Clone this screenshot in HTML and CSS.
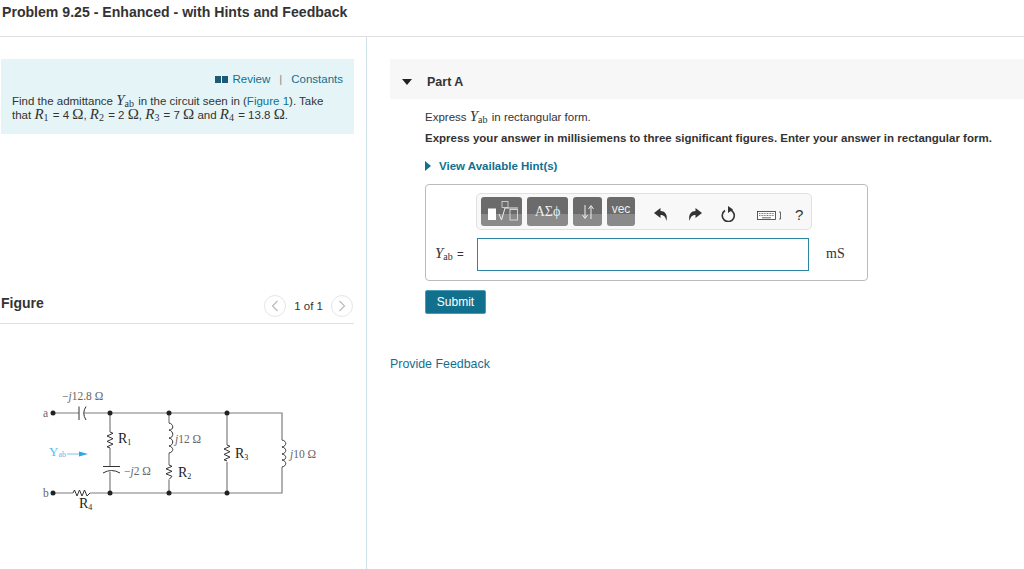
FILE: index.html
```html
<!DOCTYPE html>
<html lang="en">
<head>
    <meta charset="UTF-8">
    <title>Problem 9.25 - Enhanced - with Hints and Feedback</title>
    <link rel="stylesheet" href="styles.css">
</head>
<body>

<header class="top-bar">
    <h1>Problem 9.25 - Enhanced - with Hints and Feedback</h1>
</header>

<div class="columns">
    <section class="left">
        <div class="intro">
            <div class="intro-links">
                <svg class="book" width="13" height="7" viewBox="0 0 13 7"><rect width="6" height="7" fill="#1c5a78"/><rect x="7" width="6" height="7" fill="#1c5a78"/></svg>
                <a>Review</a><span class="sep">|</span><a>Constants</a>
            </div>
            <p>Find the admittance <i class="m">Y<sub>ab</sub></i> in the circuit seen in (<a>Figure 1</a>). Take<br>that <i class="m">R<sub>1</sub></i> = 4 <span class="m">Ω</span>, <i class="m">R<sub>2</sub></i> = 2 <span class="m">Ω</span>, <i class="m">R<sub>3</sub></i> = 7 <span class="m">Ω</span> and <i class="m">R<sub>4</sub></i> = 13.8 <span class="m">Ω</span>.</p>
        </div>

        <div class="figure-head">
            <h2>Figure</h2>
            <div class="pager">
                <span class="round"><svg width="8" height="12" viewBox="0 0 8 12"><path d="M6.5 1L1.5 6l5 5" fill="none" stroke="#bbb" stroke-width="1.2"/></svg></span>
                <span class="pager-text">1 of 1</span>
                <span class="round"><svg width="8" height="12" viewBox="0 0 8 12"><path d="M1.5 1l5 5-5 5" fill="none" stroke="#bbb" stroke-width="1.2"/></svg></span>
            </div>
        </div>

        <svg class="circuit" width="300" height="140" viewBox="0 0 300 140">
            <g fill="none" stroke="#7d7d7d" stroke-width="1.2">
                <path d="M23 33H49M54 33H252V60M252 87V113H60M43 113H23"/>
                <path d="M80 33V52M80 68V86M80 92V113"/>
                <path d="M139 33V43M139 73V85M139 100V113"/>
                <path d="M197 33V65M197 82V113"/>
            </g>
            <g fill="none" stroke="#333" stroke-width="1">
                <path d="M49 26.5V40M56 26.5Q51.5 33 56 40"/>
                <path d="M73 86.500H90M73 93Q81.500 88 90 93"/>
                <path d="M80 52l3 1.300-6 2.700 6 2.700-6 2.700 6 2.700-6 2.700 3 1.100"/>
                <path d="M139 85l3 1.300-6 2.500 6 2.500-6 2.500 6 2.500-3 3.200"/>
                <path d="M197 65l3 1.300-6 2.700 6 2.700-6 2.700 6 2.700-6 2.700 3 1.100"/>
                <path d="M43 113l1.500-3 2.500 6 2.500-6 2.500 6 2.500-6 2.500 6 3-3"/>
                <path d="M139 43c5 1 5 7 0 7c5 1 5 8 0 8c5 1 5 7 0 8c5 1 5 6 0 7"/>
                <path d="M252 60c5 1 5 6 0 7c5 1 5 6 0 7c5 1 5 6 0 6c5 1 5 6 0 7"/>
            </g>
            <g fill="#222">
                <circle cx="23" cy="33" r="2.500"/><circle cx="23" cy="113" r="2.500"/>
                <circle cx="80" cy="33" r="2.500"/><circle cx="139" cy="33" r="2.500"/><circle cx="197" cy="33" r="2.500"/>
                <circle cx="80" cy="113" r="2.500"/><circle cx="139" cy="113" r="2.500"/><circle cx="197" cy="113" r="2.500"/>
            </g>
            <g class="c-label">
                <text x="13" y="37">a</text>
                <text x="13" y="117">b</text>
                <text x="32" y="20">−<tspan font-style="italic">j</tspan>12.8 Ω</text>
                <text x="145" y="63"><tspan font-style="italic">j</tspan>12 Ω</text>
                <text x="260" y="78"><tspan font-style="italic">j</tspan>10 Ω</text>
                <text x="94" y="95">−<tspan font-style="italic">j</tspan>2 Ω</text>
            </g>
            <g class="c-res">
                <text x="88" y="63">R<tspan class="c-sub" dy="2">1</tspan></text>
                <text x="148" y="97">R<tspan class="c-sub" dy="2">2</tspan></text>
                <text x="205" y="78">R<tspan class="c-sub" dy="2">3</tspan></text>
                <text x="49" y="128">R<tspan class="c-sub" dy="2">4</tspan></text>
            </g>
            <text class="c-yab" x="19" y="76">Y<tspan font-size="8" dy="1">ab</tspan></text>
            <path d="M37 74H50" stroke="#4fb8e8" stroke-width="0.8"/>
            <path d="M49 71.500l9 2.500-9 2.500z" fill="#2fa8e0"/>
        </svg>
    </section>

    <section class="right">
        <div class="part-bar">
            <svg width="10" height="6" viewBox="0 0 10 6"><path d="M0 0h10L5 6z" fill="#222"/></svg>
            <h3>Part A</h3>
        </div>

        <div class="part-body">
            <p class="prompt">Express <i class="m">Y<sub>ab</sub></i> in rectangular form.</p>
            <p class="instruct">Express your answer in millisiemens to three significant figures. Enter your answer in rectangular form.</p>
            <p class="hint"><svg width="6" height="10" viewBox="0 0 6 10"><path d="M0 0l6 5-6 5z" fill="#12708f"/></svg>View Available Hint(s)</p>

            <div class="answer">
                <div class="toolbar">
                    <span class="tool">
                        <svg width="35" height="24" viewBox="0 0 35 24">
                            <rect x="4" y="8.500" width="8" height="11.500" fill="#fff"/>
                            <path d="M15 14l2.500 6 3.500-12H34" fill="none" stroke="#eee" stroke-width="1"/>
                            <rect x="26" y="9.500" width="7.500" height="10.500" fill="none" stroke="#ddd" stroke-width="0.9"/>
                            <rect x="18" y="1.500" width="6" height="6" fill="none" stroke="#ddd" stroke-width="0.8"/>
                        </svg>
                    </span>
                    <span class="tool">ΑΣϕ</span>
                    <span class="tool tool-arrows">
                        <svg width="14" height="16" viewBox="0 0 14 16"><path d="M4 1v13M1.500 11L4 14.500 6.500 11M10 15V2M7.500 5L10 1.500 12.500 5" fill="none" stroke="#eee" stroke-width="1"/></svg>
                    </span>
                    <span class="tool tool-vec">vec</span>
                    <svg class="act act-undo" width="14" height="13" viewBox="0 0 14 13"><path d="M6.500 0L0 5l6.500 5V7c3 0 5 1.500 6 6 1.500-7-2-10-6-10z" fill="#333"/></svg>
                    <svg class="act act-redo" width="14" height="13" viewBox="0 0 14 13"><path d="M7.500 0L14 5l-6.500 5V7c-3 0-5 1.500-6 6-1.500-7 2-10 6-10z" fill="#333"/></svg>
                    <svg class="act act-reset" width="15" height="16" viewBox="0 0 15 16"><path d="M9 3.800a6 6 0 1 1-5 .7" fill="none" stroke="#333" stroke-width="1.600"/><path d="M7 0l5 3.500L7 7z" fill="#333"/></svg>
                    <svg class="act act-keys" width="24" height="9" viewBox="0 0 24 9"><rect x="0.500" y="0.500" width="18" height="8" fill="#fff" stroke="#333" stroke-width="0.8"/><path d="M2 2.500h15M2 4.500h15" stroke="#777" stroke-width="1" stroke-dasharray="1 .6"/><path d="M5 6.800h9" stroke="#666"/><path d="M22 1h1.500v7H22" fill="none" stroke="#444" stroke-width="0.8"/></svg>
                    <span class="help">?</span>
                </div>
                <div class="entry">
                    <span class="entry-label"><i class="m">Y<sub>ab</sub></i> =</span>
                    <input type="text" class="entry-input">
                    <span class="unit">mS</span>
                </div>
            </div>

            <button class="submit">Submit</button>
        </div>

        <a class="feedback">Provide Feedback</a>
    </section>
</div>

</body>
</html>
```

FILE: styles.css
```css
body {
    margin: 0;
    height: 569px;
    overflow: hidden;
    background-color: #fff;
    color: #333;
    font-family: "Liberation Sans", Arial, sans-serif;
    font-size: 11.5px;
}

a {
    color: #12708f;
}

p {
    margin: 0;
}

.top-bar {
    height: 37px;
    box-sizing: border-box;
    border-bottom: 1px solid #dfdfdf;
    padding: 4px 2px 0;
}

.top-bar h1 {
    margin: 0;
    font-size: 14.1px;
    line-height: 16px;
    color: #333;
}

.columns {
    display: flex;
    height: 532px;
}

.left {
    width: 367px;
    box-sizing: border-box;
    border-right: 1px solid #cfe2ea;
    padding-top: 22px;
}

.intro {
    width: 353px;
    height: 75px;
    box-sizing: border-box;
    margin-left: 1px;
    padding: 13px 11px 0;
    background-color: #e5f5f7;
    line-height: 14px;
}

.intro-links {
    display: flex;
    justify-content: flex-end;
    align-items: center;
    height: 14px;
    margin-bottom: 8px;
    color: #12708f;
}

.book {
    margin-right: 5px;
}

.sep {
    margin: 0 9px;
    color: #888;
}

.m {
    font-family: "Liberation Serif", serif;
    font-size: 15px;
    line-height: 0;
}

.m sub {
    margin-right: 1px;
    font-style: normal;
    font-size: 10px;
    line-height: 0;
    vertical-align: -2px;
}

.figure-head {
    display: flex;
    justify-content: space-between;
    align-items: center;
    width: 354px;
    height: 41px;
    box-sizing: border-box;
    margin-top: 149px;
    border-bottom: 1px solid #dfdfdf;
    padding-left: 1px;
    padding-top: 4px;
}

.figure-head h2 {
    margin: 0 0 4px;
    font-size: 14px;
    color: #333;
}

.pager {
    display: flex;
    align-items: center;
    margin-top: 2px;
    margin-right: 1px;
}

.pager-text {
    margin: 0 8px;
}

.round {
    display: flex;
    justify-content: center;
    align-items: center;
    width: 22px;
    height: 22px;
    box-sizing: border-box;
    border: 1px solid #e6e6e6;
    border-radius: 50%;
}

.circuit {
    display: block;
    margin: 56px 0 0 30px;
}

.c-label text {
    font-family: "Liberation Serif", serif;
    font-size: 11.5px;
    fill: #666;
}

.c-res text {
    font-family: "Liberation Serif", serif;
    font-size: 14px;
    fill: #222;
}

.c-res .c-sub {
    font-size: 8px;
}

.c-yab {
    font-family: "Liberation Serif", serif;
    font-size: 13px;
    fill: #58bce8;
}

.right {
    flex: 1;
    padding: 22px 0 0 23px;
}

.part-bar {
    display: flex;
    align-items: center;
    height: 40px;
    box-sizing: border-box;
    padding: 5px 0 0 12px;
    background-color: #f7f7f7;
}

.part-bar h3 {
    margin: 0 0 0 15px;
    font-size: 12.5px;
    color: #333;
}

.part-body {
    padding: 10px 0 0 35px;
}

.prompt {
    height: 16px;
    line-height: 16px;
}

.instruct {
    margin-top: 6px;
    font-weight: bold;
    line-height: 14px;
}

.hint {
    display: flex;
    align-items: center;
    margin-top: 14px;
    font-weight: bold;
    line-height: 14px;
    color: #12708f;
}

.hint svg {
    margin-right: 8px;
}

.answer {
    width: 443px;
    height: 97px;
    box-sizing: border-box;
    margin-top: 11px;
    border: 1px solid #bbb;
    border-radius: 4px;
    padding: 8px 0 0 50px;
}

.toolbar {
    display: flex;
    align-items: center;
    width: 336px;
    height: 37px;
    box-sizing: border-box;
    border: 1px solid #e0e0e0;
    border-radius: 5px;
    padding-left: 4px;
    background-color: #f8f8f8;
}

.tool {
    display: flex;
    justify-content: center;
    align-items: center;
    width: 41px;
    height: 29px;
    box-sizing: border-box;
    border-radius: 3px;
    margin-right: 5px;
    background: linear-gradient(#6b6b6b 60%, #8a8a8a 60%);
    color: #eee;
    font-family: "Liberation Serif", serif;
    font-size: 14px;
}

.tool-arrows {
    width: 29px;
}

.tool-vec {
    width: 28px;
    margin-right: 0;
    align-items: flex-start;
    padding-top: 5px;
    font-family: "Liberation Sans", sans-serif;
    font-size: 12px;
}

.act {
    margin-top: 5px;
}

.act-undo {
    margin-left: 19px;
}

.act-redo {
    margin-left: 20px;
}

.act-reset {
    margin-left: 19px;
}

.act-keys {
    margin-left: 21px;
    margin-top: 7px;
}

.help {
    margin-top: 5px;
    margin-left: 14px;
    font-size: 15px;
}

.entry {
    display: flex;
    align-items: center;
    margin-top: 8px;
    margin-left: -41px;
}

.entry-label {
    display: block;
    width: 42px;
    white-space: nowrap;
    margin-bottom: 2px;
}

.entry-input {
    width: 332px;
    height: 33px;
    box-sizing: border-box;
    border: 1px solid #2d86a3;
    padding: 0;
    background-color: #fff;
}

.unit {
    margin-left: 17px;
    margin-bottom: 2px;
    font-family: "Liberation Serif", serif;
    font-size: 14px;
}

.submit {
    display: block;
    width: 61px;
    height: 24px;
    margin-top: 9px;
    border: 1px solid #4a9ab5;
    border-radius: 2px;
    padding: 0;
    background-color: #12708f;
    color: #fff;
    font-family: "Liberation Sans", sans-serif;
    font-size: 12px;
}

.feedback {
    display: block;
    margin-top: 42px;
    font-size: 12.4px;
    line-height: 16px;
}
```
